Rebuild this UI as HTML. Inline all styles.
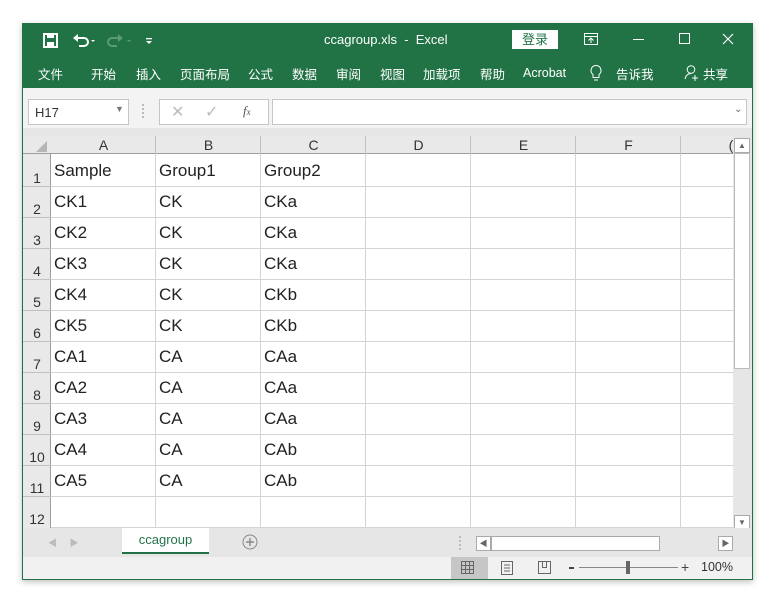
<!DOCTYPE html>
<html><head><meta charset="utf-8"><style>
*{margin:0;padding:0;box-sizing:border-box}
body{width:774px;height:604px;background:#fff;position:relative;overflow:hidden;font-family:"Liberation Sans","Noto Sans CJK SC",sans-serif}
.a{position:absolute}
.win{left:22px;top:23px;width:731px;height:557px;background:#e6e6e6;border:1px solid #217346;box-shadow:0 2px 6px rgba(0,0,0,.25)}
.t{color:#fff;font-size:12.5px;white-space:nowrap}
.cell{font-size:17px;color:#222;white-space:nowrap}
.rh{font-size:14px;color:#333;width:28px;text-align:center}
.ch{font-size:14px;color:#333;text-align:center;top:137px}
</style></head><body>
<div class="a win"></div>
<div class="a" style="left:22px;top:23px;width:731px;height:65px;background:#217346"></div>
<svg class="a" style="left:42px;top:32px" width="120" height="18" viewBox="0 0 120 18">
<rect x="2" y="2" width="13" height="13" fill="none" stroke="#fff" stroke-width="2"/><rect x="5" y="2" width="7" height="4" fill="#fff"/><rect x="5" y="10" width="7" height="5" fill="#fff"/>
<path d="M34 6 H42 A4 4 0 0 1 42 14 H37" fill="none" stroke="#fff" stroke-width="2"/><path d="M31 6 L36 2 V10Z" fill="#fff"/>
<path d="M49 8 l2 2 2-2" fill="#fff"/>
<path d="M78 6 H70 A4 4 0 0 0 70 14 H75" fill="none" stroke="#5a9a76" stroke-width="2"/><path d="M81 6 L76 2 V10Z" fill="#5a9a76"/>
<path d="M85 8 l2 2 2-2" fill="#5a9a76"/>
<rect x="104" y="6" width="6" height="1.3" fill="#fff"/><path d="M104 9 h6 l-3 3z" fill="#fff"/>
</svg>
<div class="a t" style="left:324px;top:32px;font-size:13px">ccagroup.xls&nbsp; - &nbsp;Excel</div>
<div class="a" style="left:512px;top:30px;width:46px;height:19px;background:#fff;color:#217346;font-size:13px;text-align:center;line-height:19px">登录</div>
<svg class="a" style="left:583px;top:32px" width="160" height="16"><rect x="1.5" y="1.5" width="13" height="11" fill="none" stroke="#fff"/><path d="M1.5 4.5h13M8 11V6M5.5 8.5 8 6l2.5 2.5" stroke="#fff" fill="none"/><path d="M50 7.5h11" stroke="#fff"/><rect x="96.5" y="1.5" width="10" height="10" fill="none" stroke="#fff"/><path d="M140 2l10 10M150 2l-10 10" stroke="#fff" stroke-width="1.2"/></svg>
<div class="a t" style="left:38px;top:64px">文件</div>
<div class="a t" style="left:91px;top:64px">开始</div>
<div class="a t" style="left:136px;top:64px">插入</div>
<div class="a t" style="left:180px;top:64px">页面布局</div>
<div class="a t" style="left:248px;top:64px">公式</div>
<div class="a t" style="left:292px;top:64px">数据</div>
<div class="a t" style="left:336px;top:64px">审阅</div>
<div class="a t" style="left:380px;top:64px">视图</div>
<div class="a t" style="left:423px;top:64px">加载项</div>
<div class="a t" style="left:480px;top:64px">帮助</div>
<div class="a t" style="left:523px;top:66px">Acrobat</div>
<svg class="a" style="left:589px;top:64px" width="14" height="18"><path d="M7 1.5a5 5 0 0 0-3 9v3h6v-3a5 5 0 0 0-3-9zM5 16h4" fill="none" stroke="#fff"/></svg>
<div class="a t" style="left:616px;top:64px">告诉我</div>
<svg class="a" style="left:684px;top:64px" width="16" height="18"><circle cx="7" cy="5.5" r="3.8" fill="none" stroke="#fff"/><path d="M1 15c1-4 3-5.5 6-5.5M11 11v6M8 14h6" stroke="#fff" fill="none"/></svg>
<div class="a t" style="left:703px;top:64px">共享</div>
<div class="a" style="left:23px;top:88px;width:729px;height:40px;background:#f3f3f3"></div>
<div class="a" style="left:28px;top:99px;width:101px;height:26px;background:#fff;border:1px solid #c6c6c6;font-size:13px;color:#333;padding:5px 6px">H17</div>
<div class="a" style="left:115px;top:104px;font-size:9px;color:#777">▼</div>
<div class="a" style="left:142px;top:104px;width:2px;height:14px;border-left:2px dotted #bbb"></div>
<div class="a" style="left:159px;top:99px;width:110px;height:26px;background:#fff;border:1px solid #c6c6c6"></div>
<div class="a" style="left:171px;top:102px;color:#bbb;font-size:16px">✕</div>
<div class="a" style="left:205px;top:102px;color:#bbb;font-size:16px;font-family:'DejaVu Sans',sans-serif">✓</div>
<div class="a" style="left:243px;top:103px;color:#555;font-size:13px;font-style:italic;font-family:'Liberation Serif',serif">f<span style="font-size:9px">x</span></div>
<div class="a" style="left:272px;top:99px;width:475px;height:26px;background:#fff;border:1px solid #c6c6c6"></div>
<div class="a" style="left:734px;top:104px;font-size:10px;color:#666">⌄</div>
<div class="a" style="left:23px;top:136px;width:710px;height:392px;background:#fff"></div>
<div class="a" style="left:23px;top:136px;width:710px;height:18px;background:#e9e9e9;border-bottom:1px solid #9e9e9e"></div>
<div class="a" style="left:23px;top:154px;width:28px;height:374px;background:#e9e9e9;border-right:1px solid #9e9e9e"></div>
<svg class="a" style="left:36px;top:141px" width="12" height="12"><path d="M11 0V11H0Z" fill="#b5b5b5"/></svg>
<svg class="a" style="left:23px;top:136px" width="710" height="392">
<g stroke="#d4d4d4"><path d="M132.5 18V392M237.5 18V392M342.5 18V392M447.5 18V392M552.5 18V392M657.5 18V392"/>
<path d="M28 50.5H710M28 81.5H710M28 112.5H710M28 143.5H710M28 174.5H710M28 205.5H710M28 236.5H710M28 267.5H710M28 298.5H710M28 329.5H710M28 360.5H710M28 391.5H710"/>
<path d="M0 50.5H28M0 81.5H28M0 112.5H28M0 143.5H28M0 174.5H28M0 205.5H28M0 236.5H28M0 267.5H28M0 298.5H28M0 329.5H28M0 360.5H28" stroke="#c0c0c0"/></g>
<path d="M132.5 0V18M237.5 0V18M342.5 0V18M447.5 0V18M552.5 0V18M657.5 0V18" stroke="#c0c0c0"/>
</svg>
<div class="a ch" style="left:51px;width:105px">A</div>
<div class="a ch" style="left:156px;width:105px">B</div>
<div class="a ch" style="left:261px;width:105px">C</div>
<div class="a ch" style="left:366px;width:105px">D</div>
<div class="a ch" style="left:471px;width:105px">E</div>
<div class="a ch" style="left:576px;width:105px">F</div>
<div class="a ch" style="left:726px;width:10px">(</div>
<div class="a rh" style="left:23px;top:170px">1</div>
<div class="a rh" style="left:23px;top:201px">2</div>
<div class="a rh" style="left:23px;top:232px">3</div>
<div class="a rh" style="left:23px;top:263px">4</div>
<div class="a rh" style="left:23px;top:294px">5</div>
<div class="a rh" style="left:23px;top:325px">6</div>
<div class="a rh" style="left:23px;top:356px">7</div>
<div class="a rh" style="left:23px;top:387px">8</div>
<div class="a rh" style="left:23px;top:418px">9</div>
<div class="a rh" style="left:23px;top:449px">10</div>
<div class="a rh" style="left:23px;top:480px">11</div>
<div class="a rh" style="left:23px;top:511px">12</div>
<div class="a cell" style="left:54px;top:161px">Sample</div><div class="a cell" style="left:159px;top:161px">Group1</div><div class="a cell" style="left:264px;top:161px">Group2</div>
<div class="a cell" style="left:54px;top:192px">CK1</div><div class="a cell" style="left:159px;top:192px">CK</div><div class="a cell" style="left:264px;top:192px">CKa</div>
<div class="a cell" style="left:54px;top:223px">CK2</div><div class="a cell" style="left:159px;top:223px">CK</div><div class="a cell" style="left:264px;top:223px">CKa</div>
<div class="a cell" style="left:54px;top:254px">CK3</div><div class="a cell" style="left:159px;top:254px">CK</div><div class="a cell" style="left:264px;top:254px">CKa</div>
<div class="a cell" style="left:54px;top:285px">CK4</div><div class="a cell" style="left:159px;top:285px">CK</div><div class="a cell" style="left:264px;top:285px">CKb</div>
<div class="a cell" style="left:54px;top:316px">CK5</div><div class="a cell" style="left:159px;top:316px">CK</div><div class="a cell" style="left:264px;top:316px">CKb</div>
<div class="a cell" style="left:54px;top:347px">CA1</div><div class="a cell" style="left:159px;top:347px">CA</div><div class="a cell" style="left:264px;top:347px">CAa</div>
<div class="a cell" style="left:54px;top:378px">CA2</div><div class="a cell" style="left:159px;top:378px">CA</div><div class="a cell" style="left:264px;top:378px">CAa</div>
<div class="a cell" style="left:54px;top:409px">CA3</div><div class="a cell" style="left:159px;top:409px">CA</div><div class="a cell" style="left:264px;top:409px">CAa</div>
<div class="a cell" style="left:54px;top:440px">CA4</div><div class="a cell" style="left:159px;top:440px">CA</div><div class="a cell" style="left:264px;top:440px">CAb</div>
<div class="a cell" style="left:54px;top:471px">CA5</div><div class="a cell" style="left:159px;top:471px">CA</div><div class="a cell" style="left:264px;top:471px">CAb</div>
<div class="a" style="left:733px;top:136px;width:19px;height:392px;background:#e6e6e6"></div>
<div class="a" style="left:734px;top:138px;width:16px;height:15px;background:#fff;border:1px solid #aaa;font-size:8px;text-align:center;color:#666;line-height:13px">▲</div>
<div class="a" style="left:734px;top:153px;width:16px;height:216px;background:#fff;border:1px solid #bbb"></div>
<div class="a" style="left:734px;top:515px;width:16px;height:15px;background:#fff;border:1px solid #aaa;font-size:8px;text-align:center;color:#666;line-height:13px">▼</div>
<div class="a" style="left:23px;top:528px;width:729px;height:29px;background:#e6e6e6"></div>
<div class="a" style="left:48px;top:536px;font-size:9px;color:#bbb">◀ &nbsp;&nbsp;&nbsp; ▶</div>
<div class="a" style="left:122px;top:528px;width:87px;height:26px;background:#fff;border-bottom:2px solid #217346;color:#217346;font-size:13px;text-align:center;line-height:24px">ccagroup</div>
<svg class="a" style="left:242px;top:534px" width="16" height="16"><circle cx="8" cy="8" r="7" fill="none" stroke="#888"/><path d="M8 4v8M4 8h8" stroke="#888" stroke-width="1.4"/></svg>
<div class="a" style="left:459px;top:536px;width:2px;height:14px;border-left:2px dotted #bbb"></div>
<div class="a" style="left:476px;top:536px;width:15px;height:15px;background:#fff;border:1px solid #aaa;font-size:8px;color:#666;text-align:center;line-height:13px">◀</div>
<div class="a" style="left:491px;top:536px;width:169px;height:15px;background:#fff;border:1px solid #aaa"></div>
<div class="a" style="left:718px;top:536px;width:15px;height:15px;background:#fff;border:1px solid #aaa;font-size:8px;color:#666;text-align:center;line-height:13px">▶</div>
<div class="a" style="left:23px;top:557px;width:729px;height:22px;background:#f1f1f1"></div>
<div class="a" style="left:451px;top:557px;width:37px;height:22px;background:#c6c6c6"></div>
<svg class="a" style="left:460px;top:560px" width="20" height="16"><path d="M1.5 1.5h12v12h-12zM1.5 5.5h12M1.5 9.5h12M5.5 1.5v12M9.5 1.5v12" fill="none" stroke="#666"/></svg>
<svg class="a" style="left:499px;top:560px" width="16" height="16"><rect x="2.5" y="1.5" width="11" height="13" fill="none" stroke="#666"/><path d="M5 5h6M5 8h6M5 11h6" stroke="#666"/></svg>
<svg class="a" style="left:537px;top:560px" width="16" height="16"><rect x="1.5" y="1.5" width="12" height="12" fill="none" stroke="#666"/><path d="M5.5 1.5v6h4v-6" fill="none" stroke="#666"/></svg>
<div class="a" style="left:569px;top:567px;width:5px;height:2px;background:#444"></div>
<div class="a" style="left:579px;top:567px;width:99px;height:1px;background:#888"></div>
<div class="a" style="left:626px;top:561px;width:4px;height:13px;background:#666"></div>
<div class="a" style="left:681px;top:559px;font-size:14px;color:#444">+</div>
<div class="a" style="left:701px;top:560px;font-size:12.5px;color:#333">100%</div>
</body></html>
